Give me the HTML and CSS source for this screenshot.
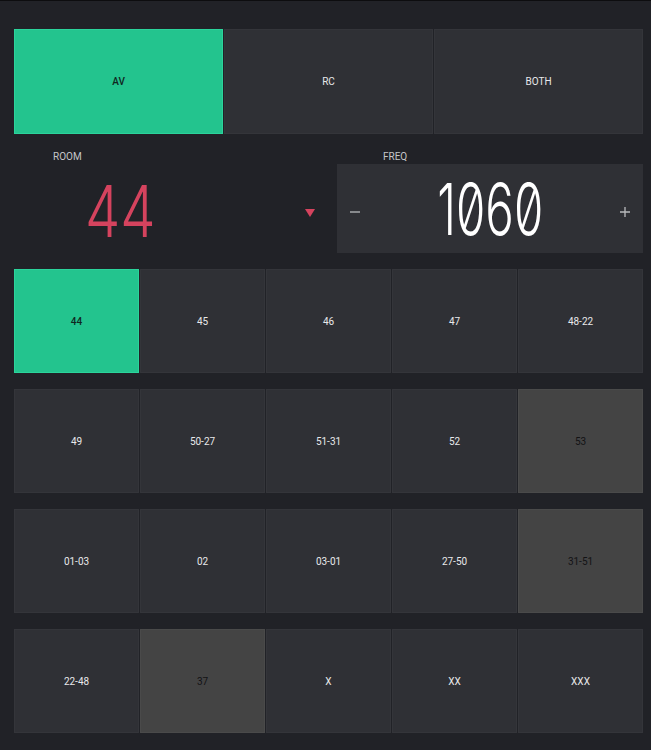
FILE: index.html
```html
<!DOCTYPE html>
<html>
<head>
<meta charset="utf-8">
<link rel="stylesheet" href="styles.css">
</head>
<body>
<div class="app">
  <div class="seg">
    <div class="btn on">AV</div>
    <div class="btn">RC</div>
    <div class="btn">BOTH</div>
  </div>
  <div class="controls">
    <div class="room">
      <div class="label room-label">ROOM</div>
      <div class="room-row">
        <span class="big red"><span class="big-inner room-num">44</span></span>
        <span class="spacer"></span>
        <span class="tri"></span>
      </div>
    </div>
    <div class="freq">
      <div class="label freq-label">FREQ</div>
      <div class="freq-box">
        <svg class="pm" width="12" height="12" viewBox="0 0 12 12"><path d="M1 6H11" stroke="#b9babd" stroke-width="1.3"/></svg>
        <span class="big white"><span class="big-inner freq-num">1060</span></span>
        <svg class="pm" width="12" height="12" viewBox="0 0 12 12"><path d="M1 6H11M6 1V11" stroke="#b9babd" stroke-width="1.3"/></svg>
      </div>
    </div>
  </div>
  <div class="grid">
    <div class="btn on">44</div>
    <div class="btn">45</div>
    <div class="btn">46</div>
    <div class="btn">47</div>
    <div class="btn">48-22</div>
  </div>
  <div class="grid">
    <div class="btn">49</div>
    <div class="btn">50-27</div>
    <div class="btn">51-31</div>
    <div class="btn">52</div>
    <div class="btn gray">53</div>
  </div>
  <div class="grid">
    <div class="btn">01-03</div>
    <div class="btn">02</div>
    <div class="btn">03-01</div>
    <div class="btn">27-50</div>
    <div class="btn gray">31-51</div>
  </div>
  <div class="grid">
    <div class="btn">22-48</div>
    <div class="btn gray">37</div>
    <div class="btn">X</div>
    <div class="btn">XX</div>
    <div class="btn">XXX</div>
  </div>
</div>
</body>
</html>
```
FILE: styles.css
```css
html, body {
  margin: 0;
  padding: 0;
  background: #212227;
}
body {
  font-family: Roboto, "Noto Sans", sans-serif;
  height: 750px;
  overflow: hidden;
  border-top: 1px solid #0d0d0f;
  box-sizing: border-box;
}
.app {
  padding: 28px 8px 0 14px;
}
.btn {
  background: #2f3035;
  border: 1px solid #34353a;
  box-sizing: border-box;
  color: #e8e8ea;
  font-size: 10px;
  display: flex;
  align-items: center;
  justify-content: center;
}
.btn.on {
  background: #23c48e;
  border-color: #2bd49b;
  color: #10271f;
  font-weight: 500;
}
.btn.gray {
  background: #444444;
  border-color: #4a4a4a;
  color: #131315;
}
.seg {
  display: grid;
  grid-template-columns: repeat(3, 1fr);
  column-gap: 1px;
  height: 105px;
}
.controls {
  display: grid;
  grid-template-columns: 1fr 306px;
  column-gap: 15px;
  padding-top: 17px;
  margin-bottom: 15px;
}
.label {
  font-size: 10px;
  color: #c5c6c9;
  line-height: 12px;
  height: 12px;
}
.room-label {
  padding-left: 39px;
}
.freq-label {
  padding-left: 46px;
}
.room-row {
  height: 91px;
  display: flex;
  align-items: center;
  padding-right: 7px;
}
.spacer { flex: 1; }
.big {
  font-family: Inter, "DejaVu Sans", sans-serif;
  font-weight: 300;
  font-size: 72px;
  line-height: 1;
  font-feature-settings: "zero" 1;
  display: inline-block;
}
.big-inner {
  display: inline-block;
  transform-origin: center;
}
.room-num { transform: scaleX(0.78); }
.freq-num { transform: scaleX(0.66); }
.red {
  color: #d5435e;
  margin-left: 61px;
  margin-top: 4px;
}
.white {
  color: #ffffff;
  margin-top: 0px;
}
.tri {
  width: 0;
  height: 0;
  border-left: 5px solid transparent;
  border-right: 5px solid transparent;
  border-top: 8px solid #d5435e;
  margin-top: 8px;
}
.freq-box {
  margin-top: 1px;
  height: 89px;
  background: #2f3035;
  display: flex;
  align-items: center;
  justify-content: space-between;
  padding: 0 12px;
}
.pm { margin-top: 6px; }
.grid {
  display: grid;
  grid-template-columns: repeat(5, 1fr);
  column-gap: 1px;
  height: 104px;
  margin-bottom: 16px;
}
```
